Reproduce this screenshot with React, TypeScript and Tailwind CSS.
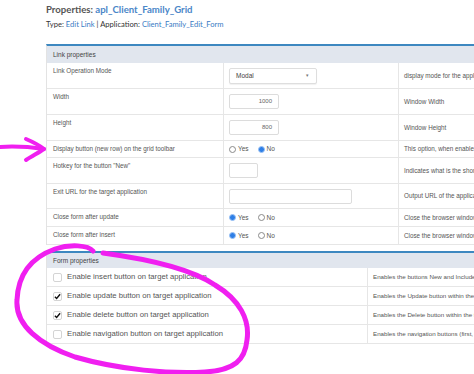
import React from "react";

type LinkRow = {
  label: string;
  help: string;
  h: string;
  field: React.ReactNode;
};

function Radio({ on }: { on?: boolean }) {
  return on ? (
    <span className="inline-block h-[7px] w-[7px] rounded-full border-[1.5px] border-[#9cc3f5] bg-[#2f7fe6]" />
  ) : (
    <span className="inline-block h-[7px] w-[7px] rounded-full border border-[#8a8a8a] bg-white" />
  );
}

function YesNo({ yes }: { yes: boolean }) {
  return (
    <div className="flex items-center gap-[2px] text-[6.5px]">
      <Radio on={yes} />
      <span className="mr-[7px]">Yes</span>
      <Radio on={!yes} />
      <span>No</span>
    </div>
  );
}

function TextBox({ w, value }: { w: string; value?: string }) {
  return (
    <div
      className={`${w} flex h-[15px] items-center justify-end rounded-[2px] border border-[#dcdcdc] bg-white pr-[6px] text-[6px] text-[#666]`}
    >
      {value}
    </div>
  );
}

function Check({ on }: { on?: boolean }) {
  return (
    <span className="flex h-[9px] w-[9px] items-center justify-center rounded-[2px] border border-[#d4d4d4] bg-white">
      {on && (
        <svg width="7" height="7" viewBox="0 0 8 8">
          <path d="M1 4.2 L3 6.2 L7 1.5" fill="none" stroke="#111" strokeWidth="1.6" />
        </svg>
      )}
    </span>
  );
}

const linkRows: LinkRow[] = [
  {
    label: "Link Operation Mode",
    help: "display mode for the application",
    h: "h-[26px]",
    field: (
      <div className="flex h-[16px] w-[88px] items-center justify-between rounded-[2px] border border-[#dedede] bg-white pl-[6px] pr-[7px] text-[6.5px] text-[#444] shadow-[0_1px_1px_rgba(0,0,0,0.06)]">
        <span>Modal</span>
        <span className="text-[5px] text-[#777]">▾</span>
      </div>
    ),
  },
  { label: "Width", help: "Window Width", h: "h-[26px]", field: <TextBox w="w-[50px]" value="1000" /> },
  { label: "Height", help: "Window Height", h: "h-[26px]", field: <TextBox w="w-[50px]" value="800" /> },
  {
    label: "Display button (new row) on the grid toolbar",
    help: "This option, when enabled, displays the button",
    h: "h-[17px]",
    field: <YesNo yes={false} />,
  },
  {
    label: 'Hotkey for the button "New"',
    help: "Indicates what is the shortcut key",
    h: "h-[26px]",
    field: <TextBox w="w-[29px]" />,
  },
  {
    label: "Exit URL for the target application",
    help: "Output URL of the application",
    h: "h-[25px]",
    field: <TextBox w="w-[123px]" />,
  },
  {
    label: "Close form after update",
    help: "Close the browser window after update",
    h: "h-[18px]",
    field: <YesNo yes={true} />,
  },
  {
    label: "Close form after insert",
    help: "Close the browser window after insert",
    h: "h-[18px]",
    field: <YesNo yes={true} />,
  },
];

const formRows = [
  { label: "Enable insert button on target application", help: "Enables the buttons New and Include in the form", on: false },
  { label: "Enable update button on target application", help: "Enables the Update button within the form", on: true },
  { label: "Enable delete button on target application", help: "Enables the Delete button within the form", on: true },
  { label: "Enable navigation button on target application", help: "Enables the navigation buttons (first, back)", on: false },
];

export default function App() {
  return (
    <div className="relative h-[374px] w-[474px] overflow-hidden bg-white font-['Liberation_Sans',Arial,sans-serif] text-[#555]">
      {/* Heading */}
      <div className="pl-[46px] pt-[2px] font-['Lato',sans-serif]">
        <div className="h-[15px] text-[9.6px] leading-[15px] font-bold text-[#555]">
          Properties: <span className="text-[#4a86c8]">apl_Client_Family_Grid</span>
        </div>
        <div className="mt-[2px] h-[10px] text-[7.6px] leading-[10px] text-[#333]">
          Type: <span className="text-[#3b7cc4]">Edit Link</span> | Application:{" "}
          <span className="text-[#3b7cc4]">Client_Family_Edit_Form</span>
        </div>
      </div>

      {/* Link properties */}
      <div className="ml-[46px] mt-[15px] w-[600px] border-t-2 border-l border-t-[#3d88c0] border-l-[#e3e3e3]">
        <div className="flex h-[17px] items-center bg-[#e1e6ee] pl-[6px] text-[6.5px] text-[#444]">Link properties</div>
        {linkRows.map((r) => (
          <div key={r.label} className={`grid grid-cols-[177px_175px_1fr] ${r.h} border-b border-[#e6e6e6] text-[6.3px]`}>
            <div className="border-r border-[#e6e6e6] pl-[6px] pt-[4px] leading-[8px]">{r.label}</div>
            <div className="flex items-center border-r border-[#e6e6e6] pl-[5px]">{r.field}</div>
            <div className="flex items-center whitespace-nowrap pl-[5px]">{r.help}</div>
          </div>
        ))}
      </div>

      {/* Form properties */}
      <div className="ml-[46px] mt-[6px] w-[600px] border-t-2 border-l border-t-[#3d88c0] border-l-[#e3e3e3]">
        <div className="flex h-[15px] items-center bg-[#e1e6ee] pl-[6px] text-[6.5px] text-[#444]">Form properties</div>
        {formRows.map((r) => (
          <div key={r.label} className="grid h-[19px] grid-cols-[321px_1fr] border-b border-[#e6e6e6]">
            <div className="flex items-center gap-[5px] border-r border-[#e6e6e6] pl-[6px] text-[7.7px]">
              <Check on={r.on} />
              <span>{r.label}</span>
            </div>
            <div className="flex items-center whitespace-nowrap pl-[5px] text-[6.2px]">{r.help}</div>
          </div>
        ))}
      </div>

      {/* Hand-drawn annotations */}
      <svg className="pointer-events-none absolute inset-0" width="474" height="374" viewBox="0 0 474 374">
        <g fill="none" stroke="#f01ff0" strokeLinecap="round" strokeLinejoin="round">
          <path d="M0 147 C15 146 30 147 44 149" strokeWidth="4" />
          <path d="M26 139 C33 142 39 145 44 149 C38 153 32 156 26 160" strokeWidth="4" />
          <path
            d="M103 253 C140 258 190 268 215 285 C240 300 250 320 247 340 C245 360 235 370 205 372 C170 374 120 370 75 357 C40 345 15 325 17 300 C18 275 30 258 55 249 C70 244 88 245 93 251"
            strokeWidth="5"
          />
        </g>
      </svg>
    </div>
  );
}
